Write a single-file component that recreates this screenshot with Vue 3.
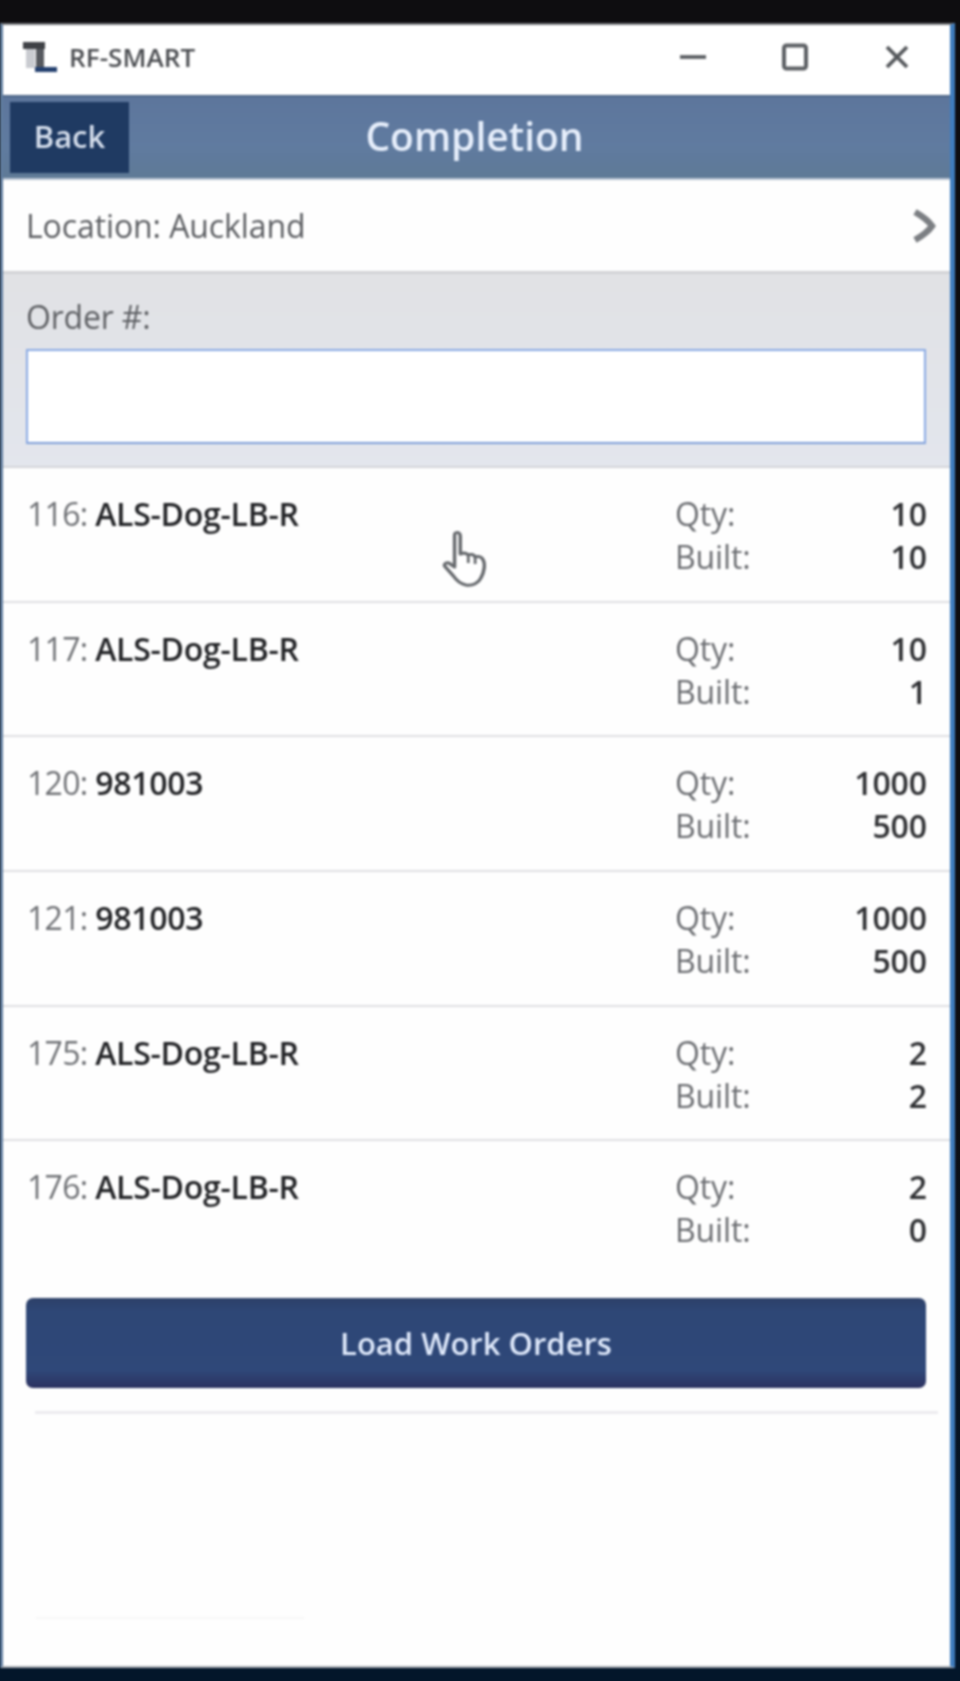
<script setup>
const rows = [
  { id: '116', item: 'ALS-Dog-LB-R', qty: 10, built: 10 },
  { id: '117', item: 'ALS-Dog-LB-R', qty: 10, built: 1 },
  { id: '120', item: '981003', qty: 1000, built: 500 },
  { id: '121', item: '981003', qty: 1000, built: 500 },
  { id: '175', item: 'ALS-Dog-LB-R', qty: 2, built: 2 },
  { id: '176', item: 'ALS-Dog-LB-R', qty: 2, built: 0 },
]
</script>

<template>
  <div class="screen">
    <div class="window">
      <div class="titlebar">
        <div class="brand">
          <svg class="logo" width="34" height="32" viewBox="0 0 34 32">
            <path d="M0 1h22v7H0z" fill="#3f4146" />
            <path d="M3 8h9v19H3z" fill="#c9cbd0" />
            <path d="M13 8h8v20h-8z" fill="#56595f" />
            <path d="M12 26h22v5H12z" fill="#24406f" />
          </svg>
          <span class="brand-name">RF-SMART</span>
        </div>
        <div class="controls">
          <svg width="30" height="30" viewBox="0 0 30 30"><path d="M2 15h26" stroke="#55585c" stroke-width="3.6" /></svg>
          <svg width="30" height="30" viewBox="0 0 30 30"><rect x="4" y="3.5" width="22" height="23" rx="2.5" fill="none" stroke="#5d6064" stroke-width="4" /></svg>
          <svg width="30" height="30" viewBox="0 0 30 30"><path d="M5 5l20 20M25 5L5 25" stroke="#55585c" stroke-width="3.8" /></svg>
        </div>
      </div>

      <header class="appbar">
        <button class="back">Back</button>
        <h1 class="title">Completion</h1>
      </header>

      <div class="location">
        <span>Location: Auckland</span>
        <svg width="28" height="34" viewBox="0 0 28 34"><path d="M4 3c7 4 13 8 17 14-4 6-10 10-17 14" fill="none" stroke="#7c7f83" stroke-width="6.5" /></svg>
      </div>

      <div class="search">
        <label class="search-label">Order #:</label>
        <div class="search-input"></div>
      </div>

      <ul class="orders">
        <li v-for="row in rows" :key="row.id" class="order">
          <div class="order-name">{{ row.id }}: <b>{{ row.item }}</b></div>
          <dl class="order-stats">
            <dt>Qty:</dt><dd>{{ row.qty }}</dd>
            <dt>Built:</dt><dd>{{ row.built }}</dd>
          </dl>
        </li>
      </ul>

      <div class="actions">
        <button class="load">Load Work Orders</button>
      </div>
      <div class="rule"></div>
      <div class="rule-faint"></div>

      <svg class="cursor" width="48" height="60" viewBox="0 0 42 60" preserveAspectRatio="none">
        <path d="M12 3c2-1 4 0 4 3v18l3-1c2 0 3 1 4 2 2-1 5-1 6 2 3-1 6 0 7 3 2 4 1 12-2 18-2 5-7 8-13 7-5-1-8-4-11-9l-7-9c-2-2 0-5 3-4l5 4V6c0-2 0-3 1-3z" fill="#fff" stroke="#66696d" stroke-width="3" stroke-linejoin="round" />
        <path d="M23 25v8M29 27v7" stroke="#66696d" stroke-width="2.4" />
      </svg>
    </div>
  </div>
</template>

<style>
html, body { margin: 0; background: #07101c; }
</style>

<style scoped>
.screen {
  width: 960px;
  height: 1681px;
  padding: 23px 5px 13px 0;
  box-sizing: border-box;
  background: linear-gradient(#0e0d10 0, #0e0d10 60%, #03162a 97%);
  font-family: "Open Sans", "Liberation Sans", sans-serif;
  overflow: hidden;
}
.window {
  position: relative;
  height: 100%;
  box-sizing: border-box;
  background: #fefefe;
  border-left: 3px solid #5f7c9e;
  border-right: 5px solid #3f7cbd;
  border-bottom: 2px solid #a8adb3;
  border-top: 2px solid #77797d;
  display: flex;
  flex-direction: column;
  filter: blur(1px);
}
.titlebar {
  height: 70px;
  flex: none;
  display: flex;
  align-items: center;
  justify-content: space-between;
  padding: 0 38px 6px 20px;
  box-sizing: border-box;
  background: #fff;
}
.brand { display: flex; align-items: center; gap: 12px; }
.brand-name { font-size: 26px; font-weight: 600; color: #4c4e52; letter-spacing: 0.1px; }
.controls { display: flex; gap: 72px; align-items: center; }
.appbar {
  position: relative;
  height: 85px;
  flex: none;
  display: flex;
  align-items: center;
  justify-content: center;
  background: linear-gradient(#5d769c 0, #607ba0 60%, #5f7a96 100%);
  border-top: 2px solid #4f6788;
  border-bottom: 2px solid #b9c4d2;
  box-sizing: border-box;
  padding-bottom: 4px;
}
.back {
  position: absolute;
  left: 7px;
  top: 5px;
  width: 119px;
  height: 71px;
  border: 0;
  padding: 0 0 4px;
  background: #1f3a62;
  color: #d5deec;
  font: 600 31px "Open Sans", sans-serif;
}
.title {
  margin: 0;
  font-size: 39px;
  font-weight: 600;
  color: #e6eefb;
  transform: translateX(-2px);
}
.location {
  height: 91px;
  flex: none;
  display: flex;
  align-items: center;
  justify-content: space-between;
  padding: 0 11px 0 23px;
  font-size: 32px;
  color: #5c5e62;
  letter-spacing: -0.1px;
  box-sizing: border-box;
}
.search {
  height: 197px;
  flex: none;
  box-sizing: border-box;
  padding: 24px 24px 0 23px;
  background: linear-gradient(#e1e2e5, #e3e6ed);
  border-top: 3px solid #d2d3d6;
  border-bottom: 2px solid #d3d5d9;
}
.search-label {
  display: block;
  font-size: 32px;
  line-height: 37px;
  color: #5f6165;
  letter-spacing: -0.2px;
}
.search-input {
  height: 95px;
  box-sizing: border-box;
  margin-top: 14px;
  background: #fff;
  border: 2px solid #8aaae4;
  border-bottom-color: #7f9fd8;
}
.orders { list-style: none; margin: 0; padding: 0; flex: none; }
.order {
  height: 134.7px;
  box-sizing: border-box;
  padding: 26px 23px 0 24px;
  display: flex;
  justify-content: space-between;
  border-bottom: 2px solid #dfe0e2;
}
.order:last-child { border-bottom: 0; }
.order-name { font-size: 32px; line-height: 40px; color: #6f7175; letter-spacing: -0.7px; }
.order-name b { font-weight: 600; color: #232427; letter-spacing: -0.25px; }
.order-stats {
  margin: 0;
  width: 252px;
  display: grid;
  grid-template-columns: 1fr auto;
  grid-auto-rows: 43px;
  font-size: 32px;
  line-height: 40px;
  letter-spacing: -0.1px;
}
.order-stats dt { color: #6c6e72; }
.order-stats dd { margin: 0; text-align: right; font-weight: 600; color: #2f3033; }
.actions { flex: none; padding: 22px 24px 0 23px; }
.load {
  display: block;
  width: 100%;
  height: 90px;
  border: 0;
  padding: 0;
  border-radius: 7px;
  background: linear-gradient(#2d4069 0, #2e4776 15%, #2f4879 80%, #2c3160 100%);
  color: #dfe9fb;
  font: 600 31px "Open Sans", sans-serif;
}
.rule {
  height: 3px;
  margin: 23px 12px 0 32px;
  background: #ecebef;
  flex: none;
}
.rule-faint {
  height: 2px;
  width: 268px;
  margin: 203px 0 0 33px;
  background: #f7f7f7;
  flex: none;
}
.cursor {
  position: absolute;
  left: 439px;
  top: 505px;
}
</style>
